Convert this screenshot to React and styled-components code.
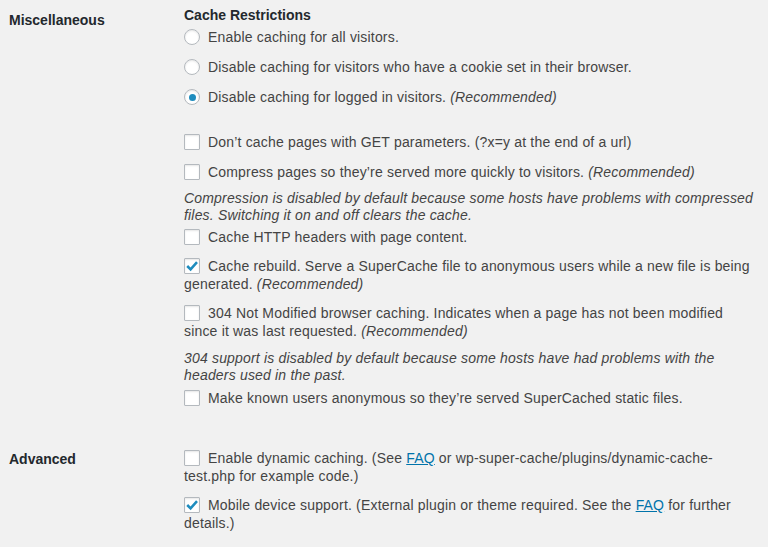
import React from "react";
import styled, { createGlobalStyle } from "styled-components";

const Global = createGlobalStyle`
  html, body { margin: 0; padding: 0; background: #f1f1f1; }
  body { font-family: "Liberation Sans", Arial, sans-serif; font-size: 14px; color: #444; letter-spacing: 0.18px; }
`;

const Page = styled.div`
  width: 768px;
  height: 547px;
  overflow: hidden;
  background: #f1f1f1;
`;

const Row = styled.div`
  display: grid;
  grid-template-columns: 184px 576px;
  padding-top: ${(p) => p.$top}px;
`;

const Th = styled.div`
  padding-left: 9px;
  padding-top: ${(p) => p.$top}px;
  font-weight: 700;
  letter-spacing: 0;
  color: #23282d;
  line-height: 18px;
`;

const Td = styled.div`
  display: flex;
  flex-direction: column;
  line-height: 18px;
`;

const Legend = styled.div`
  font-weight: 700;
  letter-spacing: 0;
  color: #23282d;
`;

const Option = styled.label`
  display: block;
  margin-top: ${(p) => p.$mt || 0}px;
`;

const Desc = styled.p`
  margin: ${(p) => p.$mt || 0}px 0 0;
  font-style: italic;
  line-height: 17px;
`;

const Box = styled.span`
  position: relative;
  display: inline-block;
  box-sizing: border-box;
  width: 16px;
  height: 16px;
  margin-right: 8px;
  vertical-align: -3px;
  background: #fff;
  border: 1px solid #b4b9be;
  border-radius: ${(p) => (p.$round ? "50%" : "1px")};
  box-shadow: inset 0 1px 2px rgba(0, 0, 0, 0.1);
`;

const Dot = styled.span`
  position: absolute;
  left: 3.5px;
  top: 3.5px;
  width: 7px;
  height: 7px;
  border-radius: 50%;
  background: #1e8cbe;
`;

const Mark = styled.svg`
  position: absolute;
  left: 0;
  top: 0;
`;

const Link = styled.a`
  color: #0073aa;
  text-decoration: underline;
`;

const Rec = styled.i``;

function Check({ on }) {
  return (
    <Box>
      {on && (
        <Mark width="14" height="14" viewBox="0 0 14 14">
          <path d="M2.2 7 L5.6 10.4 L12 3.2" fill="none" stroke="#1e8cbe" strokeWidth="2.5" />
        </Mark>
      )}
    </Box>
  );
}

function Radio({ on }) {
  return <Box $round>{on && <Dot />}</Box>;
}

export default function App() {
  return (
    <Page>
      <Global />
      <Row $top={6}>
        <Th $top={5}>Miscellaneous</Th>
        <Td>
          <Legend>Cache Restrictions</Legend>
          <Option $mt={4}>
            <Radio />Enable caching for all visitors.
          </Option>
          <Option $mt={12}>
            <Radio />Disable caching for visitors who have a cookie set in their browser.
          </Option>
          <Option $mt={12}>
            <Radio on />Disable caching for logged in visitors. <Rec>(Recommended)</Rec>
          </Option>
          <Option $mt={27}>
            <Check />Don’t cache pages with GET parameters. (?x=y at the end of a url)
          </Option>
          <Option $mt={12}>
            <Check />Compress pages so they’re served more quickly to visitors. <Rec>(Recommended)</Rec>
          </Option>
          <Desc $mt={9}>
            Compression is disabled by default because some hosts have problems with compressed files. Switching it on and off clears the cache.
          </Desc>
          <Option $mt={4}>
            <Check />Cache HTTP headers with page content.
          </Option>
          <Option $mt={11}>
            <Check on />Cache rebuild. Serve a SuperCache file to anonymous users while a new file is being generated. <Rec>(Recommended)</Rec>
          </Option>
          <Option $mt={11}>
            <Check />304 Not Modified browser caching. Indicates when a page has not been modified since it was last requested. <Rec>(Recommended)</Rec>
          </Option>
          <Desc $mt={10}>
            304 support is disabled by default because some hosts have had problems with the headers used in the past.
          </Desc>
          <Option $mt={5}>
            <Check />Make known users anonymous so they’re served SuperCached static files.
          </Option>
        </Td>
      </Row>
      <Row $top={42}>
        <Th $top={1}>Advanced</Th>
        <Td>
          <Option>
            <Check />Enable dynamic caching. (See <Link href="#">FAQ</Link> or wp-super-cache/plugins/dynamic-cache-test.php for example code.)
          </Option>
          <Option $mt={11}>
            <Check on />Mobile device support. (External plugin or theme required. See the <Link href="#">FAQ</Link> for further details.)
          </Option>
        </Td>
      </Row>
    </Page>
  );
}
